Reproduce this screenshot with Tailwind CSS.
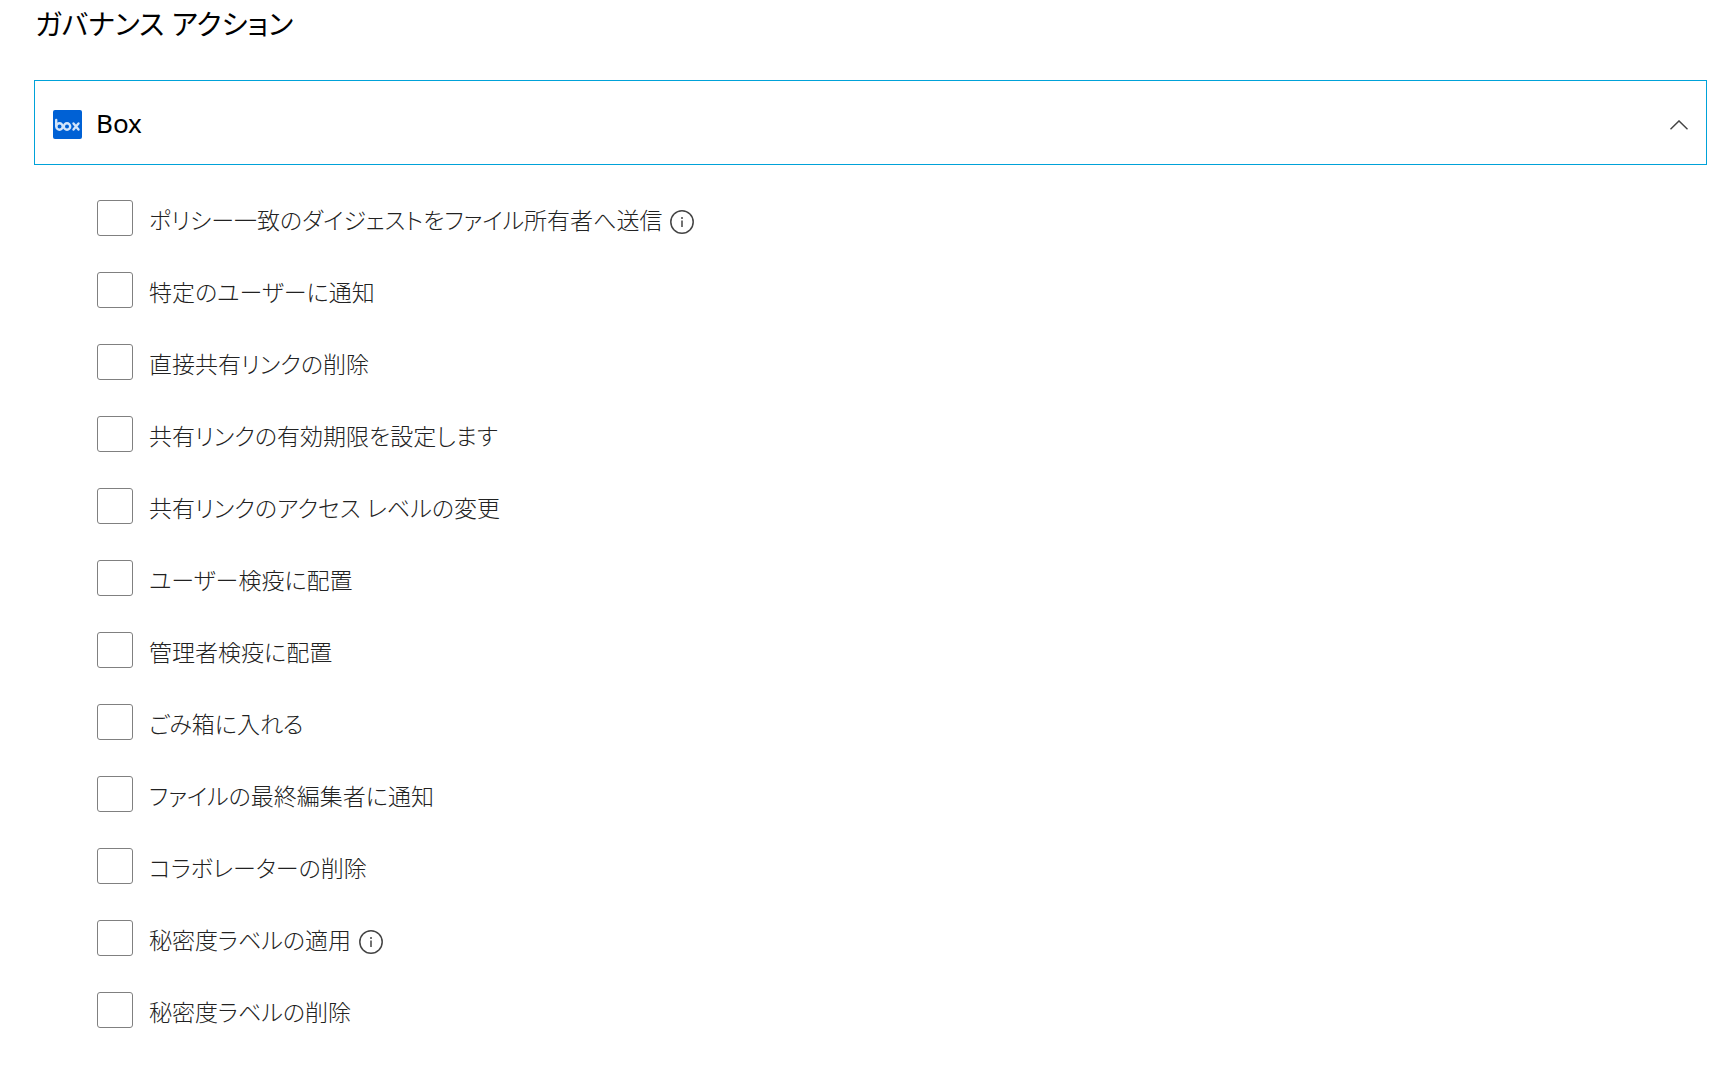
<!DOCTYPE html>
<html lang="ja">
<head>
  <meta charset="UTF-8" />
  <meta name="viewport" content="width=device-width, initial-scale=1.0"/>
  <title>ガバナンス アクション</title>
  <script src="https://cdn.jsdelivr.net/npm/@tailwindcss/browser@4"></script>
</head>
<body class="bg-white font-['Noto_Sans','Noto_Sans_CJK_JP',sans-serif] [font-feature-settings:'palt']">
  <main class="pl-[34px] pr-3 pb-8">
    <h1 class="h-20 pt-1 pl-px text-[28px] leading-10 text-black">ガバナンス アクション</h1>

    <!-- App header -->
    <button type="button" aria-expanded="true" aria-controls="actions" class="flex h-[85px] w-full items-center border border-[#00a2d9] px-[18px] pt-1 text-left">
      <svg class="h-[29px] w-[29px]" viewBox="0 0 29 29" aria-hidden="true">
        <rect width="29" height="29" rx="2" fill="#0061d5"/>
        <g fill="none" stroke="#d3e5fa" stroke-width="2.4" stroke-linecap="round" stroke-linejoin="round">
          <path d="M3.200 10v6"/>
          <circle cx="6.500" cy="16.500" r="3.200"/>
          <circle cx="14" cy="16.500" r="3.200"/>
          <path d="M20.500 13.500l5 6M25.500 13.500l-5 6"/>
        </g>
      </svg>
      <span class="ml-[14px] pb-1 text-[26px] leading-8 text-black">Box</span>
      <svg class="ml-auto h-[10px] w-[18px]" viewBox="0 0 18 10" fill="none" stroke="#444" stroke-width="1.400" aria-hidden="true">
        <path d="M.5 9.300L9 .900l8.500 8.400"/>
      </svg>
    </button>

    <!-- Actions -->
    <ul id="actions" class="space-y-9 pl-[63px] pt-[35px] text-[23px] leading-9 font-light text-[#222]">
      <li class="flex h-9 items-center gap-4">
        <input id="a1" type="checkbox" class="h-9 w-9 shrink-0 appearance-none rounded-[3px] border border-[#808080] checked:bg-[#00a2d9]" />
        <label for="a1" class="pt-1">ポリシー一致のダイジェストをファイル所有者へ送信</label>
        <button type="button" aria-label="情報" class="-ml-2 pt-2">
          <svg class="h-6 w-6" viewBox="0 0 24 24" fill="none" stroke="#444" stroke-width="1.500">
            <circle cx="12" cy="12" r="11.200"/>
            <path d="M12 10.500v6.500M12 7v2"/>
          </svg>
        </button>
      </li>
      <li class="flex h-9 items-center gap-4">
        <input id="a2" type="checkbox" class="h-9 w-9 shrink-0 appearance-none rounded-[3px] border border-[#808080] checked:bg-[#00a2d9]" />
        <label for="a2" class="pt-1">特定のユーザーに通知</label>
      </li>
      <li class="flex h-9 items-center gap-4">
        <input id="a3" type="checkbox" class="h-9 w-9 shrink-0 appearance-none rounded-[3px] border border-[#808080] checked:bg-[#00a2d9]" />
        <label for="a3" class="pt-1">直接共有リンクの削除</label>
      </li>
      <li class="flex h-9 items-center gap-4">
        <input id="a4" type="checkbox" class="h-9 w-9 shrink-0 appearance-none rounded-[3px] border border-[#808080] checked:bg-[#00a2d9]" />
        <label for="a4" class="pt-1">共有リンクの有効期限を設定します</label>
      </li>
      <li class="flex h-9 items-center gap-4">
        <input id="a5" type="checkbox" class="h-9 w-9 shrink-0 appearance-none rounded-[3px] border border-[#808080] checked:bg-[#00a2d9]" />
        <label for="a5" class="pt-1">共有リンクのアクセス レベルの変更</label>
      </li>
      <li class="flex h-9 items-center gap-4">
        <input id="a6" type="checkbox" class="h-9 w-9 shrink-0 appearance-none rounded-[3px] border border-[#808080] checked:bg-[#00a2d9]" />
        <label for="a6" class="pt-1">ユーザー検疫に配置</label>
      </li>
      <li class="flex h-9 items-center gap-4">
        <input id="a7" type="checkbox" class="h-9 w-9 shrink-0 appearance-none rounded-[3px] border border-[#808080] checked:bg-[#00a2d9]" />
        <label for="a7" class="pt-1">管理者検疫に配置</label>
      </li>
      <li class="flex h-9 items-center gap-4">
        <input id="a8" type="checkbox" class="h-9 w-9 shrink-0 appearance-none rounded-[3px] border border-[#808080] checked:bg-[#00a2d9]" />
        <label for="a8" class="pt-1">ごみ箱に入れる</label>
      </li>
      <li class="flex h-9 items-center gap-4">
        <input id="a9" type="checkbox" class="h-9 w-9 shrink-0 appearance-none rounded-[3px] border border-[#808080] checked:bg-[#00a2d9]" />
        <label for="a9" class="pt-1">ファイルの最終編集者に通知</label>
      </li>
      <li class="flex h-9 items-center gap-4">
        <input id="a10" type="checkbox" class="h-9 w-9 shrink-0 appearance-none rounded-[3px] border border-[#808080] checked:bg-[#00a2d9]" />
        <label for="a10" class="pt-1">コラボレーターの削除</label>
      </li>
      <li class="flex h-9 items-center gap-4">
        <input id="a11" type="checkbox" class="h-9 w-9 shrink-0 appearance-none rounded-[3px] border border-[#808080] checked:bg-[#00a2d9]" />
        <label for="a11" class="pt-1">秘密度ラベルの適用</label>
        <button type="button" aria-label="情報" class="-ml-2 pt-2">
          <svg class="h-6 w-6" viewBox="0 0 24 24" fill="none" stroke="#444" stroke-width="1.500">
            <circle cx="12" cy="12" r="11.200"/>
            <path d="M12 10.500v6.500M12 7v2"/>
          </svg>
        </button>
      </li>
      <li class="flex h-9 items-center gap-4">
        <input id="a12" type="checkbox" class="h-9 w-9 shrink-0 appearance-none rounded-[3px] border border-[#808080] checked:bg-[#00a2d9]" />
        <label for="a12" class="pt-1">秘密度ラベルの削除</label>
      </li>
    </ul>
  </main>
</body>
</html>
